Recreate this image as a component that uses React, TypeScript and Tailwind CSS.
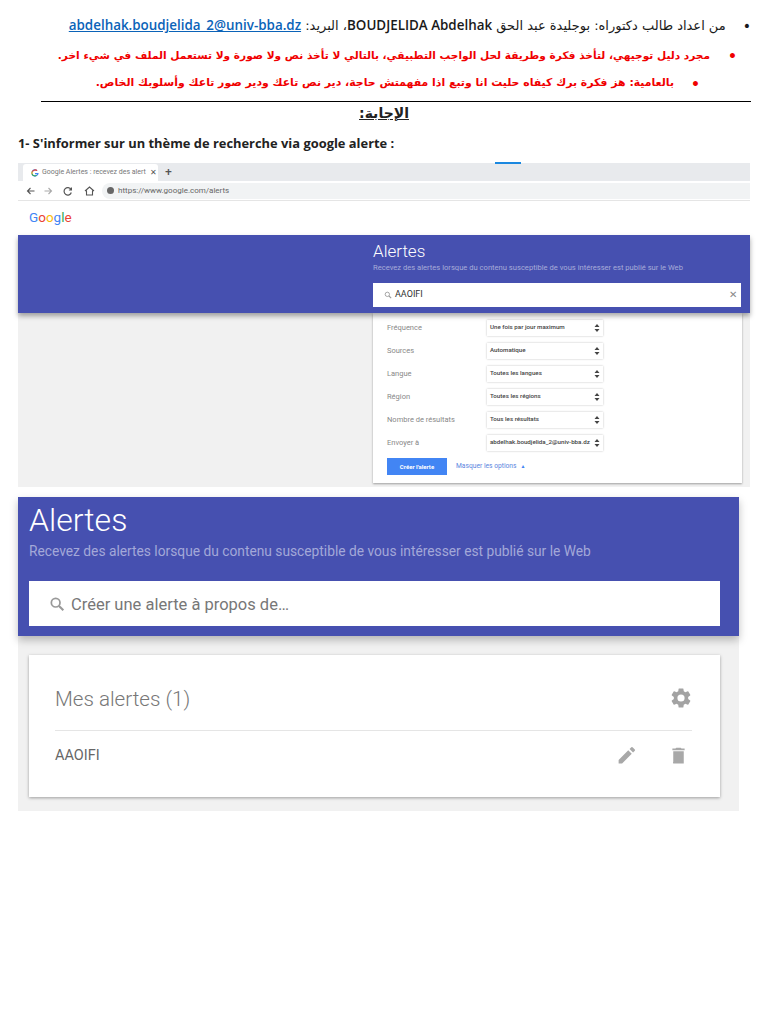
import React from "react";

const ar = "font-['DejaVu_Sans',sans-serif]";
const rob = "font-['Roboto',sans-serif]";

const rows = [
  ["Fréquence", "Une fois par jour maximum"],
  ["Sources", "Automatique"],
  ["Langue", "Toutes les langues"],
  ["Région", "Toutes les régions"],
  ["Nombre de résultats", "Tous les résultats"],
  ["Envoyer à", "abdelhak.boudjelida_2@univ-bba.dz"],
];

function SearchIcon({ size, className }: { size: number; className?: string }) {
  return (
    <svg width={size} height={size} viewBox="0 0 24 24" className={className}>
      <circle cx="10" cy="10" r="6.5" fill="none" stroke="currentColor" strokeWidth="2.6" />
      <path d="M15 15l6.5 6.5" stroke="currentColor" strokeWidth="3.2" />
    </svg>
  );
}

function GoogleG() {
  return (
    <svg width="8" height="8" viewBox="0 0 24 24">
      <path d="M22 12h-10v3.5h6c-.8 2.4-3 4-6 4a7.500 7.500 0 010-15c1.900 0 3.500.6 4.800 1.800l2.600-2.600A11 11 0 1023 12z" fill="#4285f4" />
      <path d="M2.500 7l3 2.300A7.500 7.500 0 0112 4.500c1.900 0 3.500.6 4.800 1.800l2.600-2.600A11 11 0 002.500 7z" fill="#ea4335" />
      <path d="M2 16.500l3-2.400a7.500 7.500 0 0 1 0-4.500L2.500 7a11 11 0 0 0-.5 9.500z" fill="#fbbc05" />
      <path d="M2 16.500a11 11 0 0 0 16 3.500l-2.800-2.200c-3.500 2.500-8.500.8-10.200-3.700z" fill="#34a853" />
    </svg>
  );
}

function Spinner() {
  return (
    <svg width="6" height="8" viewBox="0 0 6 8" className="shrink-0 text-[#444]">
      <path d="M3 0l2.500 3h-5zM3 8l2.500-3h-5z" fill="currentColor" />
    </svg>
  );
}

function Small() {
  return (
    <div className="mx-[18px] mt-[10px] h-[324px] w-[732px] flex flex-col bg-[#f1f1f1] relative">
      <div className="absolute left-[477px] -top-px h-[2px] w-[26px] bg-[#1a88e0]" />
      <div className="h-[18px] bg-[#e8eaed] flex items-end pl-[5px] shrink-0">
        <div className={`h-[17px] w-[135px] bg-white rounded-t-[3px] flex items-center pl-[8px] gap-[3px] text-[7px] text-[#777] ${rob}`}>
          <GoogleG />
          <span className="whitespace-nowrap">Google Alertes : recevez des alert</span>
          <span className="ml-[1px] text-[#555] text-[8px]">✕</span>
        </div>
        <span className="self-center ml-[7px] text-[12px] leading-none text-[#555] font-bold">+</span>
      </div>
      <div className="h-[20px] bg-white border-b border-[#e5e5e5] flex items-center pl-[8px] shrink-0 text-[#555]">
        <svg width="70" height="12" viewBox="0 0 70 12" className="shrink-0">
          <path d="M8.500 6H1.500M4.500 3L1.500 6l3 3" fill="none" stroke="#555" strokeWidth="1.100" />
          <path d="M25.500 6h-7M22.500 3l3 3-3 3" fill="none" stroke="#aaa" strokeWidth="1.100" />
          <path d="M45 4.500A3.700 3.700 0 1 0 45.300 7.500M45.400 2.500v2.500h-2.500" fill="none" stroke="#555" strokeWidth="1.200" />
          <path d="M59 6l4.500-4 4.500 4M60.500 5.500V10h6V5.500" fill="none" stroke="#555" strokeWidth="1.100" />
        </svg>
        <div className={`ml-[6px] h-[16px] flex-1 rounded-l-full bg-[#f1f3f4] flex items-center pl-[5px] gap-[4px] text-[8px] text-[#666] ${rob}`}>
          <span className="h-[7px] w-[7px] rounded-full bg-[#666]" />
          <span>https://www.google.com/alerts</span>
        </div>
      </div>
      <div className="h-[34px] bg-white flex items-center pl-[11px] shrink-0">
        <span className={`text-[13.500px] leading-none ${rob}`}>
          <span className="text-[#4285f4]">G</span><span className="text-[#ea4335]">o</span><span className="text-[#fbbc05]">o</span><span className="text-[#4285f4]">g</span><span className="text-[#34a853]">l</span><span className="text-[#ea4335]">e</span>
        </span>
      </div>
      <div className={`relative z-10 h-[78px] bg-[#4650b0] shadow-[0_3px_5px_rgba(0,0,0,0.35)] pl-[355px] pr-[9px] shrink-0 flex flex-col ${rob}`}>
        <div className="text-[17px] font-light leading-none text-white mt-[8px]">Alertes</div>
        <div className="text-[7.600px] leading-none text-[#a7acd9] mt-[4px] whitespace-nowrap">Recevez des alertes lorsque du contenu susceptible de vous intéresser est publié sur le Web</div>
        <div className="h-[24px] bg-white mt-[11px] flex items-center pl-[11px] pr-[4px] text-[#999]">
          <SearchIcon size={8} />
          <span className="ml-[3px] pt-[1px] text-[9px] text-[#333]">AAOIFI</span>
          <span className="ml-auto text-[#888] text-[10px] leading-none">✕</span>
        </div>
      </div>
      <div className="flex-1 pl-[355px] pr-[8px] pb-[4px] flex flex-col">
        <div className={`flex-1 bg-white shadow-[0_1px_2px_rgba(0,0,0,0.35)] pl-[14px] pt-[3px] flex flex-col ${rob}`}>
          {rows.map(([l, v]) => (
            <div key={l} className="h-[23px] flex items-center shrink-0">
              <span className="w-[100px] text-[7.500px] text-[#888] whitespace-nowrap">{l}</span>
              <div className="w-[116px] h-[16px] bg-white shadow-[0_0_2px_rgba(0,0,0,0.25)] flex items-center justify-between pl-[3px] pr-[3px] text-[6.200px] text-[#444] font-medium whitespace-nowrap overflow-hidden">
                <span>{v}</span>
                <Spinner />
              </div>
            </div>
          ))}
          <div className="flex items-center mt-[4px]">
            <div className="w-[60px] h-[17px] bg-[#4285f4] text-white text-[6px] font-bold flex items-center justify-center">Créer l'alerte</div>
            <span className="ml-[9px] text-[6.700px] text-[#5b85e0] whitespace-nowrap">Masquer les options</span>
            <span className="ml-[4px] text-[#4285f4] text-[5px]">▲</span>
          </div>
        </div>
      </div>
    </div>
  );
}

function Large() {
  return (
    <div className={`mx-[18px] mt-[10px] w-[721px] h-[314px] bg-[#f1f1f1] flex flex-col ${rob}`}>
      <div className="h-[139px] bg-[#4650b0] shadow-[0_4px_8px_rgba(0,0,0,0.25)] px-[11px] pt-[4px] pr-[19px] shrink-0 flex flex-col">
        <div className="text-[32px] font-light leading-[38px] text-white">Alertes</div>
        <div className="text-[13.770px] leading-[16px] text-[#a3a8d8] mt-[4px] whitespace-nowrap">Recevez des alertes lorsque du contenu susceptible de vous intéresser est publié sur le Web</div>
        <div className="h-[45px] bg-white mt-[22px] flex items-center pl-[20px] text-[#999]">
          <SearchIcon size={16} />
          <span className="ml-[6px] pt-[3px] text-[16.500px] text-[#777]">Créer une alerte à propos de…</span>
        </div>
      </div>
      <div className="ml-[11px] mt-[19px] mr-[19px] h-[142px] bg-white shadow-[0_1px_3px_rgba(0,0,0,0.35)] pl-[26px] pr-[28px] flex flex-col">
        <div className="h-[76px] flex justify-between border-b border-[#e5e5e5] shrink-0">
          <span className="mt-[31px] h-[26px] leading-[26px] text-[20.600px] font-light text-[#777]">Mes alertes (1)</span>
          <svg width="24" height="24" viewBox="0 0 24 24" className="mt-[31px] mr-[-1px] text-[#a3a3a3]">
            <path fill="currentColor" d="M19.140 12.940c.04-.3.060-.61.060-.94 0-.32-.02-.64-.07-.94l2.030-1.580a.49.490 0 0 0 .12-.61l-1.920-3.320a.49.490 0 0 0-.59-.22l-2.390.96c-.5-.38-1.030-.7-1.620-.94l-.36-2.540a.48.480 0 0 0-.48-.41h-3.840a.47.470 0 0 0-.47.41l-.36 2.540c-.59.240-1.130.57-1.620.94l-2.390-.96a.49.490 0 0 0-.59.220L2.740 8.870a.48.480 0 0 0 .12.61l2.030 1.580c-.05.3-.09.630-.09.940s.02.640.07.940l-2.030 1.580a.49.490 0 0 0-.12.610l1.920 3.320c.12.220.37.290.59.220l2.390-.96c.5.380 1.030.7 1.620.94l.36 2.540c.05.240.24.410.48.410h3.840c.24 0 .44-.17.470-.41l.36-2.540c.59-.24 1.130-.56 1.620-.94l2.390.96c.22.080.47 0 .59-.22l1.920-3.320a.48.480 0 0 0-.12-.61zM12 15.600a3.600 3.600 0 1 1 0-7.200 3.600 3.600 0 0 1 0 7.200z" />
          </svg>
        </div>
        <div className="flex-1 flex items-center pb-[17px]">
          <span className="text-[14.500px] text-[#666]">AAOIFI</span>
          <svg width="21" height="21" viewBox="0 0 24 24" className="ml-auto text-[#a8a8a8]">
            <path fill="currentColor" d="M3 21v-4l11-11 4 4L7 21zM15.500 4.500l2-2a1 1 0 0 1 1.400 0l2.600 2.600a1 1 0 0 1 0 1.400l-2 2z" />
          </svg>
          <svg width="21" height="21" viewBox="0 0 24 24" className="ml-[31px] mr-[3px] text-[#a8a8a8]">
            <path fill="currentColor" d="M6 19a2 2 0 0 0 0 2h12V7H6zM19 4h-3.500l-1-1h-5l-1 1H5v2h14z" />
          </svg>
        </div>
      </div>
    </div>
  );
}

export default function App() {
  return (
    <div className="w-[768px] h-[1024px] bg-white overflow-hidden flex flex-col">
      <div className={`pt-[16px] ${ar} font-bold`} dir="rtl">
        <div className="h-[19px] pr-[17px] flex items-center gap-[17px] text-[#1a1a1a] font-normal text-[13px] whitespace-nowrap">
          <span className="text-[14px] leading-none">•</span>
          <span>
            من اعداد طالب دكتوراه: بوجليدة عبد الحق <span className="font-['Open_Sans',sans-serif] font-semibold text-[13.400px]">BOUDJELIDA Abdelhak</span>، البريد:{" "}
            <span className="font-['Open_Sans',sans-serif] font-semibold text-[13.400px] text-[#0b63b8] underline" dir="ltr">abdelhak.boudjelida_2@univ-bba.dz</span>
          </span>
        </div>
        <div className="h-[19px] mt-[11px] pr-[31px] flex items-center gap-[18px] text-[#f00000] text-[10.600px] whitespace-nowrap">
          <span className="text-[14px] leading-none">•</span>
          <span>مجرد دليل توجيهي، لتأخذ فكرة وطريقة لحل الواجب التطبيقي، بالتالي لا تأخذ نص ولا صورة ولا تستعمل الملف في شيء اخر.</span>
        </div>
        <div className="h-[19px] mt-[9px] pr-[68px] flex items-center gap-[17px] text-[#f00000] text-[10.900px] whitespace-nowrap">
          <span className="text-[14px] leading-none">•</span>
          <span>بالعامية: هز فكرة برك كيفاه حليت انا وتبع اذا مفهمتش حاجة، دير نص تاعك ودير صور تاعك وأسلوبك الخاص.</span>
        </div>
      </div>
      <div className="mx-[41px] mt-[8px] w-[710px] border-t border-black h-px shrink-0" />
      <div className={`text-center mt-[1px] h-[20px] leading-[20px] ${ar} font-bold text-[14px] underline text-[#222]`} dir="rtl">الإجابة:</div>
      <div className="pl-[18px] mt-[10px] h-[20px] leading-[20px] font-['Open_Sans',sans-serif] font-bold text-[12.900px] text-[#222]">1- S'informer sur un thème de recherche via google alerte :</div>
      <Small />
      <Large />
    </div>
  );
}
